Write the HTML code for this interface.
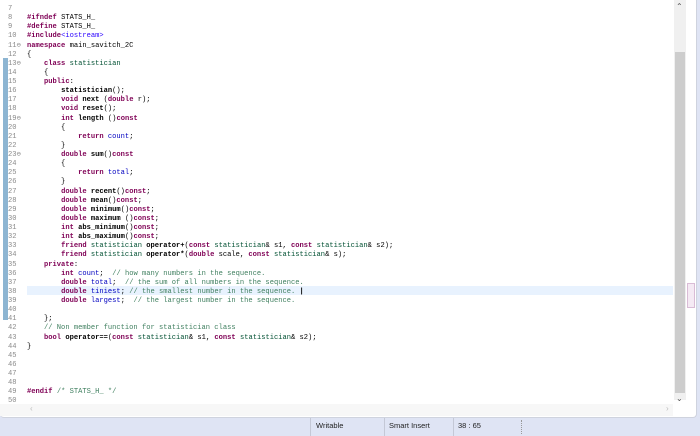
<!DOCTYPE html>
<html><head><meta charset="utf-8"><style>
body{margin:0;width:700px;height:436px;background:#dfe4f4;overflow:hidden;font-family:"Liberation Sans",sans-serif;position:relative}
#ed{position:absolute;left:0;top:0;width:696px;height:417px;background:#fff;border-radius:0 0 4px 4px;border-right:1px solid #cfd3de;border-bottom:1px solid #cfd3de}
#bar{position:absolute;left:3px;top:58px;width:5px;height:262px;background:#8db5d2}
#hl{position:absolute;left:27px;top:286px;width:646px;height:9px;background:#e8f2fe}
#code{position:absolute;left:0;top:5px;font-family:"Liberation Mono",monospace;font-size:7.1px;line-height:9.12px;white-space:pre;color:#000}
.n{display:inline-block;width:27px;color:#8a8a8a;padding-left:8px;box-sizing:border-box}
.k{color:#7f0055;font-weight:bold}
.t{color:#005032}
.f{color:#0000c0}
.c{color:#3f7f5f}
.s{color:#2a00ff}
#vs{position:absolute;left:674px;top:0;width:12px;height:400px;background:#f0f0f0}
#th{position:absolute;left:675px;top:52px;width:10px;height:341px;background:#cdcdcd}
#mark{position:absolute;left:687px;top:283px;width:6px;height:23px;border:1px solid #d9bcd6;background:#f5eaf4}
.st{position:absolute;top:421px;font-size:7.5px;color:#222}
.sep{position:absolute;top:418px;width:1px;height:18px;background:#c4c8d6}
</style></head><body>
<div id="ed"></div>
<div id="bar"></div>
<div id="hl"></div>
<div id="vs"></div><div id="th"></div><div id="mark"></div>
<div style="position:absolute;left:676px;top:2px;font-size:8px;color:#555">&#8963;</div>
<div style="position:absolute;left:676px;top:394px;font-size:8px;color:#555">&#8964;</div>
<div style="position:absolute;left:0;top:404px;width:673px;height:12px;background:#f7f7f7"></div>
<div style="position:absolute;left:30px;top:404px;font-size:8px;color:#bbb">&lsaquo;</div>
<div style="position:absolute;left:666px;top:404px;font-size:8px;color:#bbb">&rsaquo;</div>
<div id="code"><span class="n">7</span>
<span class="n">8</span><span class="k">#ifndef</span> STATS_H_
<span class="n">9</span><span class="k">#define</span> STATS_H_
<span class="n">10</span><span class="k">#include</span><span class="s">&lt;iostream&gt;</span>
<span class="n">11⊖</span><span class="k">namespace</span> main_savitch_2C
<span class="n">12</span>{
<span class="n">13⊖</span>    <span class="k">class</span> <span class="t">statistician</span>
<span class="n">14</span>    {
<span class="n">15</span>    <span class="k">public</span>:
<span class="n">16</span>        <b>statistician</b>();
<span class="n">17</span>        <span class="k">void</span> <b>next</b> (<span class="k">double</span> r);
<span class="n">18</span>        <span class="k">void</span> <b>reset</b>();
<span class="n">19⊖</span>        <span class="k">int</span> <b>length</b> ()<span class="k">const</span>
<span class="n">20</span>        {
<span class="n">21</span>            <span class="k">return</span> <span class="f">count</span>;
<span class="n">22</span>        }
<span class="n">23⊖</span>        <span class="k">double</span> <b>sum</b>()<span class="k">const</span>
<span class="n">24</span>        {
<span class="n">25</span>            <span class="k">return</span> <span class="f">total</span>;
<span class="n">26</span>        }
<span class="n">27</span>        <span class="k">double</span> <b>recent</b>()<span class="k">const</span>;
<span class="n">28</span>        <span class="k">double</span> <b>mean</b>()<span class="k">const</span>;
<span class="n">29</span>        <span class="k">double</span> <b>minimum</b>()<span class="k">const</span>;
<span class="n">30</span>        <span class="k">double</span> <b>maximum</b> ()<span class="k">const</span>;
<span class="n">31</span>        <span class="k">int</span> <b>abs_minimum</b>()<span class="k">const</span>;
<span class="n">32</span>        <span class="k">int</span> <b>abs_maximum</b>()<span class="k">const</span>;
<span class="n">33</span>        <span class="k">friend</span> <span class="t">statistician</span> <b>operator+</b>(<span class="k">const</span> <span class="t">statistician</span>&amp; s1, <span class="k">const</span> <span class="t">statistician</span>&amp; s2);
<span class="n">34</span>        <span class="k">friend</span> <span class="t">statistician</span> <b>operator*</b>(<span class="k">double</span> scale, <span class="k">const</span> <span class="t">statistician</span>&amp; s);
<span class="n">35</span>    <span class="k">private</span>:
<span class="n">36</span>        <span class="k">int</span> <span class="f">count</span>;  <span class="c">// how many numbers in the sequence.</span>
<span class="n">37</span>        <span class="k">double</span> <span class="f">total</span>;  <span class="c">// the sum of all numbers in the sequence.</span>
<span class="n">38</span>        <span class="k">double</span> <span class="f">tiniest</span>; <span class="c">// the smallest number in the sequence.</span> <b>|</b>
<span class="n">39</span>        <span class="k">double</span> <span class="f">largest</span>;  <span class="c">// the largest number in the sequence.</span>
<span class="n">40</span>
<span class="n">41</span>    };
<span class="n">42</span>    <span class="c">// Non member function for statistician class</span>
<span class="n">43</span>    <span class="k">bool</span> <b>operator==</b>(<span class="k">const</span> <span class="t">statistician</span>&amp; s1, <span class="k">const</span> <span class="t">statistician</span>&amp; s2);
<span class="n">44</span>}
<span class="n">45</span>
<span class="n">46</span>
<span class="n">47</span>
<span class="n">48</span>
<span class="n">49</span><span class="k">#endif</span> <span class="c">/* STATS_H_ */</span>
<span class="n">50</span></div>
<div class="sep" style="left:310px"></div>
<div class="st" style="left:316px">Writable</div>
<div class="sep" style="left:384px"></div>
<div class="st" style="left:389px">Smart Insert</div>
<div class="sep" style="left:453px"></div>
<div class="st" style="left:458px">38 : 65</div>
<div style="position:absolute;left:521px;top:420px;height:14px;border-left:1px dotted #999"></div>
</body></html>
